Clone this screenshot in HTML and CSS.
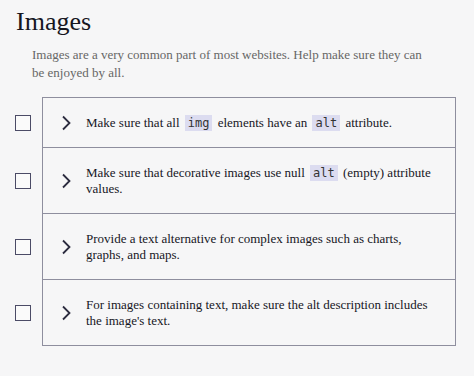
FILE: index.html
```html
<!DOCTYPE html>
<html lang="en">
<head>
    <meta charset="UTF-8">
    <meta name="viewport" content="width=device-width, initial-scale=1.0">
    <title>Images checklist</title>
    <link rel="stylesheet" href="styles.css">
</head>
<body>

    <div class="section">
        <h1>Images</h1>
        <p class="intro">Images are a very common part of most websites. Help make sure they can be enjoyed by all.</p>

        <!-- Checklist -->
        <ul class="checklist">
            <li class="check-row">
                <div class="check-col"><span class="checkbox"></span></div>
                <div class="check-item">
                    <svg class="chevron" width="10" height="16" viewBox="0 0 10 16"><path d="M1 1.5 L7.5 8 L1 14.5" fill="none" stroke="#2b2b3f" stroke-width="1.8"/></svg>
                    <p>Make sure that all <code>img</code> elements have an <code>alt</code> attribute.</p>
                </div>
            </li>
            <li class="check-row">
                <div class="check-col"><span class="checkbox"></span></div>
                <div class="check-item">
                    <svg class="chevron" width="10" height="16" viewBox="0 0 10 16"><path d="M1 1.5 L7.5 8 L1 14.5" fill="none" stroke="#2b2b3f" stroke-width="1.8"/></svg>
                    <p>Make sure that decorative images use null <code>alt</code> (empty) attribute values.</p>
                </div>
            </li>
            <li class="check-row">
                <div class="check-col"><span class="checkbox"></span></div>
                <div class="check-item">
                    <svg class="chevron" width="10" height="16" viewBox="0 0 10 16"><path d="M1 1.5 L7.5 8 L1 14.5" fill="none" stroke="#2b2b3f" stroke-width="1.8"/></svg>
                    <p>Provide a text alternative for complex images such as charts, graphs, and maps.</p>
                </div>
            </li>
            <li class="check-row">
                <div class="check-col"><span class="checkbox"></span></div>
                <div class="check-item">
                    <svg class="chevron" width="10" height="16" viewBox="0 0 10 16"><path d="M1 1.5 L7.5 8 L1 14.5" fill="none" stroke="#2b2b3f" stroke-width="1.8"/></svg>
                    <p>For images containing text, make sure the alt description includes the image's text.</p>
                </div>
            </li>
        </ul>
    </div>

</body>
</html>
```

FILE: styles.css
```css
body {
    margin: 0;
    font-family: 'Liberation Serif', serif;
    background-color: #f6f6f7;
    color: #16161f;
}

.section {
    padding: 6px 18px 0 16px;
}

h1 {
    font-size: 26px;
    font-weight: normal;
    margin: 0;
    line-height: 32px;
}

.intro {
    margin: 8px 0 0 16px;
    font-size: 13px;
    line-height: 18px;
    color: #666;
    max-width: 400px;
}

.checklist {
    list-style: none;
    margin: 15px 0 0 -16px;
    padding: 0;
}

.check-row {
    display: flex;
}

.check-col {
    width: 42px;
    display: flex;
    align-items: center;
    padding-left: 15px;
    box-sizing: border-box;
}

.checkbox {
    width: 16px;
    height: 16px;
    box-sizing: border-box;
    border: 1.5px solid #4b4b66;
    background: #fafafa;
}

.check-item {
    flex: 1;
    display: flex;
    align-items: center;
    gap: 14px;
    padding: 16.5px 20px 16.5px 19px;
    border: 1px solid #8e8e9e;
    border-top: none;
}

.check-row:first-child .check-item {
    border-top: 1px solid #8e8e9e;
}

.chevron {
    flex-shrink: 0;
}

.check-item p {
    margin: 0;
    font-size: 13px;
    line-height: 16px;
}

code {
    font-family: 'DejaVu Sans Mono', monospace;
    font-size: 12px;
    line-height: 14px;
    color: #333;
    background-color: #dcdcf0;
    padding: 1px 3px;
    margin: 0 2px;
}
```
